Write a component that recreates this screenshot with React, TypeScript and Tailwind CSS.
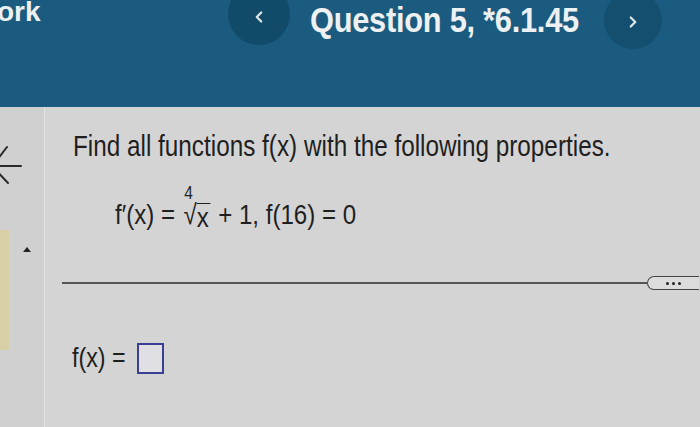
import { ChevronLeft, ChevronRight } from 'lucide-react';

// Question header + problem body, as seen on the homework screen.
export default function App() {
  return (
    <div className="flex h-[427px] w-[700px] flex-col overflow-hidden bg-[#d3d3d3] font-['Liberation_Sans',Arial,sans-serif]">
      <header className="flex h-[107px] shrink-0 items-start bg-[#1b5b7f] text-[#eef1f3]">
        <span className="-ml-[3px] w-[231px] text-[28px] font-bold leading-[24px]">ork</span>
        <button
          type="button"
          className="-mt-[17px] flex h-[62px] w-[62px] items-center justify-center rounded-full bg-[#124a6a]"
        >
          <ChevronLeft size={18} strokeWidth={3} className="mt-[6px] text-[#dfe6ea]" />
        </button>
        <h1 className="ml-[20px] w-[270px] origin-left scale-x-[0.88] whitespace-nowrap text-[35px] font-bold leading-[40px] tracking-[-0.3px]">
          Question 5, *6.1.45
        </h1>
        <button
          type="button"
          className="-mt-[9px] ml-[24px] flex h-[58px] w-[58px] items-center justify-center rounded-full bg-[#154f70]"
        >
          <ChevronRight size={18} strokeWidth={3} className="mt-[4px] text-[#dfe6ea]" />
        </button>
      </header>

      <div className="flex min-h-0 flex-1">
        {/* Left rail: collapse arrow (tip runs off the edge), highlight strip, scroll caret */}
        <aside className="relative w-[45px] shrink-0 border-r border-[#e2e2e2] bg-[#d0d0d0]">
          <svg className="absolute left-0 top-[38px] overflow-visible" width="24" height="44" viewBox="0 0 24 44">
            <g stroke="#2a2a2a" strokeWidth="2" strokeLinecap="round" fill="none">
              <line x1="0" y1="21" x2="21" y2="21" />
              <line x1="-6" y1="19" x2="7" y2="2" />
              <line x1="-6" y1="23" x2="8" y2="38" />
            </g>
          </svg>
          <div className="absolute left-0 top-[123px] h-[120px] w-[9px] bg-[#d9cfa6]" />
          <div className="absolute left-[23px] top-[140px] h-0 w-0 border-x-[4px] border-b-[5px] border-x-transparent border-b-[#222]" />
        </aside>

        <main className="flex min-w-0 flex-1 flex-col overflow-hidden bg-[#d4d4d4] pt-[22px] text-[#1f1f1f]">
          <p className="ml-[28px] origin-left scale-x-[0.81] whitespace-nowrap text-[30px] leading-[34px]">
            Find all functions f(x) with the following properties.
          </p>

          <div className="ml-[70px] mt-[36px] flex origin-left scale-x-[0.86] items-end whitespace-pre text-[28px] leading-[32px]">
            <span>f′(x) = </span>
            <span className="relative ml-[2px] flex items-end">
              <span className="absolute -top-[15px] left-[1px] text-[18px] leading-none">4</span>
              <span className="leading-[32px]">√</span>
              <span className="border-t-[1.5px] border-[#1f1f1f] pr-[2px] leading-[27px]">x</span>
            </span>
            <span className="ml-[9px]">+ 1, f(16) = 0</span>
          </div>

          <div className="mt-[45px] flex w-[654px] items-center">
            <div className="ml-[17px] h-[1.5px] flex-1 bg-[#555]" />
            <div className="flex h-[14px] w-[52px] shrink-0 items-center justify-center gap-[3px] rounded-l-full border-[1.5px] border-r-0 border-[#444] bg-[#dcdcdc]">
              <span className="h-[3px] w-[3px] rounded-full bg-[#222]" />
              <span className="h-[3px] w-[3px] rounded-full bg-[#222]" />
              <span className="h-[3px] w-[3px] rounded-full bg-[#222]" />
            </div>
          </div>

          <div className="ml-[27px] mt-[52px] flex items-center">
            <span className="w-[60px] origin-left scale-x-[0.86] whitespace-pre text-[27px] leading-[32px]">f(x) =</span>
            <span className="ml-[5px] h-[31px] w-[27px] border-2 border-[#3b3f94] bg-[#e0e0e4]" />
          </div>
        </main>
      </div>
    </div>
  );
}
